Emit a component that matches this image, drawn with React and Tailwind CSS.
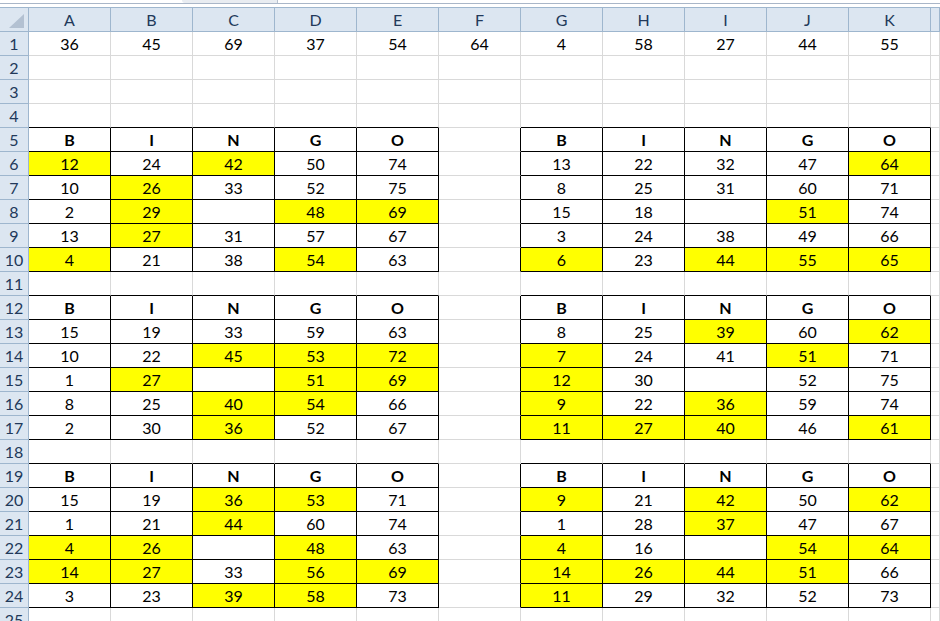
const COLS = ['A', 'B', 'C', 'D', 'E', 'F', 'G', 'H', 'I', 'J', 'K', '']

const row1 = ['36', '45', '69', '37', '54', '64', '4', '58', '27', '44', '55']

// '*' = highlighted, '-' = empty free cell
const leftCards = [
  ['12* 24 42* 50 74', '10 26* 33 52 75', '2 29* - 48* 69*', '13 27* 31 57 67', '4* 21 38 54* 63'],
  ['15 19 33 59 63', '10 22 45* 53* 72*', '1 27* - 51* 69*', '8 25 40* 54* 66', '2 30 36* 52 67'],
  ['15 19 36* 53* 71', '1 21 44* 60 74', '4* 26* - 48* 63', '14* 27* 33 56* 69*', '3 23 39* 58* 73'],
]

const rightCards = [
  ['13 22 32 47 64*', '8 25 31 60 71', '15 18 - 51* 74', '3 24 38 49 66', '6* 23 44* 55* 65*'],
  ['8 25 39* 60 62*', '7* 24 41 51* 71', '12* 30 - 52 75', '9* 22 36* 59 74', '11* 27* 40* 46 61*'],
  ['9* 21 42* 50 62*', '1 28 37* 47 67', '4* 16 - 54* 64*', '14* 26* 44* 51* 66', '11* 29 32 52 73'],
]

const cardStarts = [5, 12, 19]
const BINGO = ['B', 'I', 'N', 'G', 'O']

const inCard = (r, c) => {
  const colOk = (c >= 0 && c <= 4) || (c >= 6 && c <= 10)
  const rowOk = cardStarts.some((s) => r >= s && r <= s + 5)
  return colOk && rowOk
}

const getCell = (r, c) => {
  if (r === 1) return { text: row1[c] || '' }
  if (!inCard(r, c)) return { text: '' }
  const start = cardStarts.find((s) => r >= s && r <= s + 5)
  const idx = cardStarts.indexOf(start)
  const right = c >= 6
  const col = right ? c - 6 : c
  if (r === start) return { text: BINGO[col], bold: true }
  const line = (right ? rightCards : leftCards)[idx][r - start - 1].split(' ')[col]
  if (line === '-') return { text: '' }
  const yellow = line.endsWith('*')
  return { text: line.replace('*', ''), yellow }
}

const rows = Array.from({ length: 25 }, (_, i) => i + 1)

export default function App() {
  return (
    <div className="h-[621px] w-[940px] overflow-hidden bg-white font-['Lato','Liberation_Sans',sans-serif] text-[16px] text-black">
      {/* formula bar edge */}
      <div className="flex h-[7px] flex-col">
        <div className="flex h-[3px]">
          <div className="w-[182px]" />
          <div className="w-[96px] rounded-bl-[6px] border-r border-[#b7c2d0] bg-[#e8ecf1]" />
          <div className="flex-1" />
        </div>
        <div className="h-px bg-[#a9b6c8]" />
        <div className="h-[3px] bg-white" />
      </div>

      <div className="grid grid-cols-[29px_repeat(11,82px)_1fr]">
        {/* column headers */}
        <div className="flex h-[25px] items-end justify-end border-t border-r border-b border-[#9eb6ce] bg-[#dce6f1] pb-[3px] pr-[4px]">
          <svg width="15" height="14" viewBox="0 0 15 14">
            <polygon points="15,0 15,14 0,14" fill="#b3c1d2" />
          </svg>
        </div>
        {COLS.map((l, i) => (
          <div
            key={i}
            className="flex h-[25px] items-center justify-center border-t border-r border-b border-[#9eb6ce] bg-[#dce6f1] text-[#22395a]"
          >
            {l}
          </div>
        ))}

        {rows.map((r) => (
          <div key={r} className="contents">
            <div className="flex h-[24px] items-center justify-center border-r border-b border-[#9eb6ce] bg-[#dce6f1] pt-px text-[#22395a]">
              {r}
            </div>
            {COLS.map((_, c) => {
              const cell = getCell(r, c)
              const rightBlack = inCard(r, c) || inCard(r, c + 1)
              const bottomBlack = inCard(r, c) || inCard(r + 1, c)
              return (
                <div
                  key={c}
                  className={[
                    'flex h-[24px] items-center justify-center border-r border-b pt-px',
                    rightBlack ? 'border-r-black' : 'border-r-[#d9d9d9]',
                    bottomBlack ? 'border-b-black' : 'border-b-[#d9d9d9]',
                    cell.yellow ? 'bg-[#ffff00]' : 'bg-white',
                    cell.bold ? 'font-bold' : '',
                  ].join(' ')}
                >
                  {cell.text}
                </div>
              )
            })}
          </div>
        ))}
      </div>
    </div>
  )
}
